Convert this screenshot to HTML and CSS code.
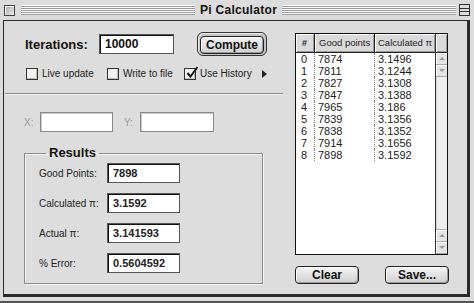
FILE: index.html
```html
<!DOCTYPE html>
<html lang="en">
  <head>
    <meta charset="UTF-8" />
    <title>Pi Calculator</title>
    <link rel="stylesheet" href="styles.css">
  </head>
  <body>
    <div class="window">
      <div class="titlebar">
        <span class="close-box"></span>
        <span class="stripes stripes-left"></span>
        <span class="title">Pi Calculator</span>
        <span class="stripes"></span>
        <span class="zoom-box"></span>
      </div>

      <div class="content">
        <div class="left">
          <div class="iter-row">
            <span class="iter-label">Iterations:</span>
            <div class="field iter-field">10000</div>
            <div class="default-ring"><button class="btn">Compute</button></div>
          </div>

          <div class="check-row">
            <label class="check"><span class="box"></span>Live update</label>
            <label class="check"><span class="box"></span>Write to file</label>
            <label class="check">
              <span class="box">
                <svg width="14" height="14" viewBox="0 0 14 14"><path d="M2.5 7 L5.5 10.5 L12.5 1" fill="none" stroke="#111" stroke-width="2"/></svg>
              </span>Use History<span class="tri"></span>
            </label>
          </div>

          <div class="separator"></div>

          <div class="xy-row">
            <span class="dim-label">X:</span>
            <div class="field-dim"></div>
            <span class="dim-label y-label">Y:</span>
            <div class="field-dim wide"></div>
          </div>

          <fieldset class="results">
            <legend>Results</legend>
            <div class="result-grid">
              <span>Good Points:</span><div class="field value">7898</div>
              <span>Calculated π:</span><div class="field value">3.1592</div>
              <span>Actual π:</span><div class="field value">3.141593</div>
              <span>% Error:</span><div class="field value">0.5604592</div>
            </div>
          </fieldset>
        </div>

        <div class="right">
          <div class="table">
            <div class="cols">
              <div class="head">
                <div class="hcell c-num">#</div>
                <div class="hcell c-good">Good points</div>
                <div class="hcell c-calc">Calculated π</div>
              </div>
              <div class="rows">
                <div class="row"><span class="c-num">0</span><span class="c-good">7874</span><span class="c-calc">3.1496</span></div>
                <div class="row"><span class="c-num">1</span><span class="c-good">7811</span><span class="c-calc">3.1244</span></div>
                <div class="row"><span class="c-num">2</span><span class="c-good">7827</span><span class="c-calc">3.1308</span></div>
                <div class="row"><span class="c-num">3</span><span class="c-good">7847</span><span class="c-calc">3.1388</span></div>
                <div class="row"><span class="c-num">4</span><span class="c-good">7965</span><span class="c-calc">3.186</span></div>
                <div class="row"><span class="c-num">5</span><span class="c-good">7839</span><span class="c-calc">3.1356</span></div>
                <div class="row"><span class="c-num">6</span><span class="c-good">7838</span><span class="c-calc">3.1352</span></div>
                <div class="row"><span class="c-num">7</span><span class="c-good">7914</span><span class="c-calc">3.1656</span></div>
                <div class="row"><span class="c-num">8</span><span class="c-good">7898</span><span class="c-calc">3.1592</span></div>
              </div>
            </div>
            <div class="scroll">
              <div class="scroll-head"></div>
              <div class="arrow up"></div>
              <div class="arrow down"></div>
              <div class="track"></div>
              <div class="arrow up"></div>
              <div class="arrow down"></div>
            </div>
          </div>

          <div class="actions">
            <button class="btn">Clear</button>
            <button class="btn">Save...</button>
          </div>
        </div>
      </div>
    </div>
  </body>
</html>
```

FILE: styles.css
```css
body {
  margin: 0;
  font-family: "Liberation Sans", Arial, sans-serif;
  color: #111;
}
.window {
  width: 474px;
  height: 303px;
  box-sizing: border-box;
  padding: 0 4px 6px 3px;
  background-color: #dcdcdc;
  display: flex;
  flex-direction: column;
  box-shadow: inset 0 -2px 0 #555;
}

/* title bar */
.titlebar {
  height: 20px;
  display: flex;
  align-items: center;
  padding-left: 1px;
}
.close-box {
  width: 11px;
  height: 11px;
  box-sizing: border-box;
  border: 1px solid #444;
  background: linear-gradient(135deg, #aaa, #eee);
  box-shadow: inset 1px 1px 0 #fff;
}
.stripes {
  flex: 1;
  height: 10px;
  margin: 0 3px;
  background: repeating-linear-gradient(to bottom, #fafafa 0 1px, #9c9c9c 1px 2px);
}
.stripes-left {
  margin-left: 6px;
}
.title {
  font-size: 12px;
  font-weight: bold;
  letter-spacing: 0.3px;
  padding: 0 2px;
}
.zoom-box {
  width: 11px;
  height: 12px;
  box-sizing: border-box;
  border: 1px solid #333;
  background: linear-gradient(to bottom, #ddd 0 3px, #333 3px 4px, #ddd 4px 6px, #333 6px 7px, #ddd 7px);
}

/* window body */
.content {
  flex: 1;
  display: flex;
  border-style: solid;
  border-color: #2a2a2a;
  border-width: 1px 3px 3px 1px;
  background-color: #dddddd;
}
.left {
  width: 281px;
}
.iter-row {
  margin-top: 11px;
  height: 24px;
  padding-left: 21px;
  display: flex;
  align-items: center;
}
.iter-label {
  width: 74px;
  font-size: 13px;
  font-weight: bold;
}
.field {
  height: 20px;
  box-sizing: border-box;
  border: 1px solid #555;
  box-shadow: inset 1px 1px 0 #111;
  background-color: white;
  font-size: 12px;
  font-weight: bold;
  line-height: 18px;
  padding-left: 5px;
}
.iter-field {
  width: 75px;
}
.default-ring {
  width: 70px;
  height: 24px;
  margin-left: 23px;
  box-sizing: border-box;
  border: 1px solid #333;
  border-radius: 6px;
  padding: 2px;
  background-color: #c4c4c4;
  box-shadow: inset 1px 1px 0 #eee;
}
.default-ring .btn {
  width: 100%;
  height: 100%;
}
.btn {
  height: 18px;
  width: 64px;
  padding: 0;
  box-sizing: border-box;
  border: 1px solid #222;
  border-radius: 4px;
  background: linear-gradient(to bottom, #f4f4f4, #d0d0d0);
  box-shadow: inset 1px 1px 0 #fff, inset -1px -1px 0 #999;
  font-family: "Liberation Sans", Arial, sans-serif;
  font-size: 12px;
  font-weight: bold;
  color: #111;
}

.check-row {
  margin-top: 11px;
  height: 13px;
  padding-left: 22px;
  display: grid;
  grid-template-columns: 81px 77px auto;
  align-items: center;
}
.check {
  display: flex;
  align-items: center;
  gap: 4px;
  font-size: 10px;
  color: #222;
}
.box {
  width: 12px;
  height: 12px;
  box-sizing: border-box;
  border: 1px solid #333;
  background-color: #f2f2f2;
  box-shadow: inset -1px -1px 0 #bbb;
  display: flex;
  align-items: flex-end;
}
.box svg {
  margin: 0 0 -1px 0;
  flex: none;
}
.tri {
  margin-left: 6px;
  width: 0;
  height: 0;
  border-left: 5px solid #222;
  border-top: 4px solid transparent;
  border-bottom: 4px solid transparent;
}

.separator {
  margin: 13px 0 0 1px;
  width: 278px;
  height: 1px;
  background-color: #8c8c8c;
  box-shadow: 0 1px 0 #f4f4f4;
}

.xy-row {
  margin-top: 18px;
  height: 20px;
  padding-left: 20px;
  display: flex;
  align-items: center;
}
.dim-label {
  width: 16px;
  font-size: 10px;
  color: #9a9a9a;
}
.y-label {
  margin-left: 11px;
}
.field-dim {
  width: 73px;
  height: 20px;
  box-sizing: border-box;
  border: 1px solid #8a8a8a;
  box-shadow: inset 1px 1px 0 #c8c8c8;
  background-color: white;
}
.field-dim.wide {
  width: 74px;
}

.results {
  margin: 14px 0 0 20px;
  width: 239px;
  min-inline-size: 0;
  box-sizing: border-box;
  border: 1px solid #8c8c8c;
  box-shadow: inset 1px 1px 0 #f4f4f4, 1px 1px 0 #f4f4f4;
  padding: 3px 0 10px 14px;
}
.results legend {
  margin-left: 7px;
  padding: 0 3px;
  font-size: 13px;
  font-weight: bold;
  line-height: 14px;
}
.result-grid {
  display: grid;
  grid-template-columns: 68px 73px;
  row-gap: 10px;
  align-items: center;
  font-size: 10px;
  color: #222;
}
.value {
  font-size: 11px;
}

/* history table */
.right {
  padding: 12px 0 0 10px;
}
.table {
  width: 153px;
  height: 222px;
  box-sizing: border-box;
  border: 1px solid #111;
  display: flex;
  background-color: white;
}
.cols {
  flex: 1;
}
.head {
  display: flex;
  height: 19px;
}
.hcell {
  box-sizing: border-box;
  border-bottom: 1px solid #222;
  background-color: #dadada;
  box-shadow: inset 1px 1px 0 #fff, inset -1px -1px 0 #999;
  font-size: 9.5px;
  line-height: 18px;
  padding-left: 4px;
  color: #222;
  white-space: nowrap;
  overflow: hidden;
}
.hcell.c-calc {
  padding-left: 3px;
}
.hcell.c-num,
.hcell.c-good {
  border-right: 1px solid #222;
}
.hcell.c-num {
  font-weight: bold;
  font-size: 9px;
  padding-left: 6px;
}
.c-num {
  width: 19px;
}
.c-good {
  width: 60px;
}
.c-calc {
  width: 60px;
}
.row {
  display: flex;
  height: 12px;
  font-size: 11px;
  line-height: 12px;
  color: #222;
}
.row span {
  box-sizing: border-box;
  padding-left: 3px;
}
.row .c-num {
  padding-left: 5px;
}
.row .c-num,
.row .c-good {
  border-right: 1px dotted #888;
}
.scroll {
  width: 12px;
  box-sizing: border-box;
  border-left: 1px solid #333;
  display: flex;
  flex-direction: column;
  background-color: #eeeeee;
}
.scroll-head {
  height: 19px;
  box-sizing: border-box;
  border-bottom: 1px solid #222;
  background-color: #dadada;
  box-shadow: inset 1px 1px 0 #fff, inset -1px -1px 0 #999;
}
.arrow {
  height: 12px;
  box-sizing: border-box;
  border-bottom: 1px solid #aaa;
  background-color: #e4e4e4;
  box-shadow: inset 1px 1px 0 #fff;
  display: flex;
  align-items: center;
  justify-content: center;
}
.arrow::after {
  content: "";
  width: 0;
  height: 0;
  border-left: 3px solid transparent;
  border-right: 3px solid transparent;
}
.arrow.up::after {
  border-bottom: 3px solid #999;
}
.arrow.down::after {
  border-top: 3px solid #999;
}
.track {
  flex: 1;
  border-bottom: 1px solid #aaa;
  box-shadow: inset 1px 0 0 #d4d4d4;
}
.actions {
  width: 154px;
  margin-top: 11px;
  display: flex;
  justify-content: space-between;
}
```
